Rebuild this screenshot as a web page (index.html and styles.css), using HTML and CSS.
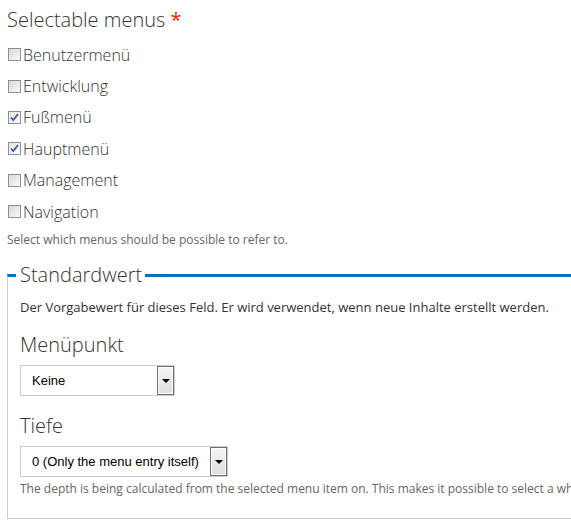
FILE: index.html
```html
<!DOCTYPE html>
<html lang="de">
<head>
    <meta charset="UTF-8">
    <meta name="viewport" content="width=device-width, initial-scale=1.0">
    <title>Menüfeld</title>
    <link rel="stylesheet" href="styles.css">
</head>
<body>
    <div class="form-item">
        <h2 class="item-label">Selectable menus <span class="required">*</span></h2>
        <ul class="checkboxes">
            <li><span class="box"></span>Benutzermenü</li>
            <li><span class="box"></span>Entwicklung</li>
            <li><span class="box checked"><svg viewBox="0 0 11 11" width="11" height="11"><path d="M2 5.5 L4.3 8 L9 2" fill="none" stroke="#3b5aa8" stroke-width="1.8"/></svg></span>Fußmenü</li>
            <li><span class="box checked"><svg viewBox="0 0 11 11" width="11" height="11"><path d="M2 5.5 L4.3 8 L9 2" fill="none" stroke="#3b5aa8" stroke-width="1.8"/></svg></span>Hauptmenü</li>
            <li><span class="box"></span>Management</li>
            <li><span class="box"></span>Navigation</li>
        </ul>
        <p class="description">Select which menus should be possible to refer to.</p>
    </div>

    <fieldset class="default-value">
        <legend>Standardwert</legend>
        <div class="fieldset-wrapper">
            <p class="fieldset-description">Der Vorgabewert für dieses Feld. Er wird verwendet, wenn neue Inhalte erstellt werden.</p>

            <div class="field">
                <div class="item-label">Menüpunkt</div>
                <div class="select select-parent">
                    <span class="select-value">Keine</span>
                    <span class="select-button"><span class="arrow"></span></span>
                </div>
            </div>

            <div class="field field-depth">
                <div class="item-label">Tiefe</div>
                <div class="select select-depth">
                    <span class="select-value">0 (Only the menu entry itself)</span>
                    <span class="select-button"><span class="arrow"></span></span>
                </div>
                <p class="description">The depth is being calculated from the selected menu item on. This makes it possible to select a whole branch of the menu tree.</p>
            </div>
        </div>
    </fieldset>
</body>
</html>
```

FILE: styles.css
```css
html {
    overflow: hidden;
}

body {
    font-family: 'Open Sans', 'Noto Sans', sans-serif;
    margin: 0;
    padding: 7px 0 0 7px;
    background-color: #fff;
    color: #333;
    width: 720px;
}

.item-label {
    font-size: 20px;
    font-weight: 300;
    line-height: 26px;
    margin: 0;
    color: #333;
}

.required {
    color: #e32700;
    font-weight: normal;
}

.checkboxes {
    list-style: none;
    margin: 6px 0 0 0;
    padding: 0;
}

.checkboxes li {
    display: flex;
    align-items: center;
    height: 31.4px;
    font-size: 16px;
    font-weight: 300;
    padding-left: 1px;
    color: #333;
}

.box {
    display: flex;
    align-items: center;
    justify-content: center;
    box-sizing: border-box;
    width: 13px;
    height: 13px;
    margin-right: 2px;
    border: 1px solid #8e8f8f;
    background: linear-gradient(135deg, #d8d8d8, #fbfbfb);
}

.box.checked {
    background: linear-gradient(135deg, #e4e4e4, #fdfdfd);
}

.description {
    font-size: 12px;
    line-height: 18px;
    margin: 4px 0 0 0;
    color: #666;
}

.default-value {
    margin: 13px 0 0 0;
    padding: 0 0 20px 8px;
    border: 1px solid #ccc;
    border-top: 3px solid #0074bd;
    border-right: none;
}

.default-value legend {
    font-size: 20px;
    font-weight: 300;
    line-height: 26px;
    padding: 0 3px 0 4px;
    color: #333;
}

.fieldset-wrapper {
    padding: 9px 0 0 4px;
}

.fieldset-description {
    font-size: 13px;
    line-height: 20px;
    margin: 0;
    color: #333;
}

.field {
    margin-top: 15px;
}

.field-depth {
    margin-top: 17px;
}

.field .description {
    margin-top: 3px;
    white-space: nowrap;
}

.select {
    display: flex;
    align-items: center;
    box-sizing: border-box;
    height: 31px;
    margin-top: 7px;
    border: 1px solid #ccc;
    background: #fff;
    font-family: 'Liberation Sans', Arial, sans-serif;
    font-size: 13px;
    color: #000;
}

.select-parent {
    width: 155px;
}

.select-depth {
    width: 208px;
}

.select-value {
    flex: 1;
    padding-left: 11px;
}

.select-button {
    display: flex;
    align-items: center;
    justify-content: center;
    box-sizing: border-box;
    width: 17px;
    height: 29px;
    border: 1px solid #707070;
    box-shadow: inset 0 0 0 1px #fcfcfc;
    background: linear-gradient(#f4f4f4, #dedede);
}

.arrow {
    width: 0;
    height: 0;
    border-left: 4px solid transparent;
    border-right: 4px solid transparent;
    border-top: 4px solid #000;
}
```
